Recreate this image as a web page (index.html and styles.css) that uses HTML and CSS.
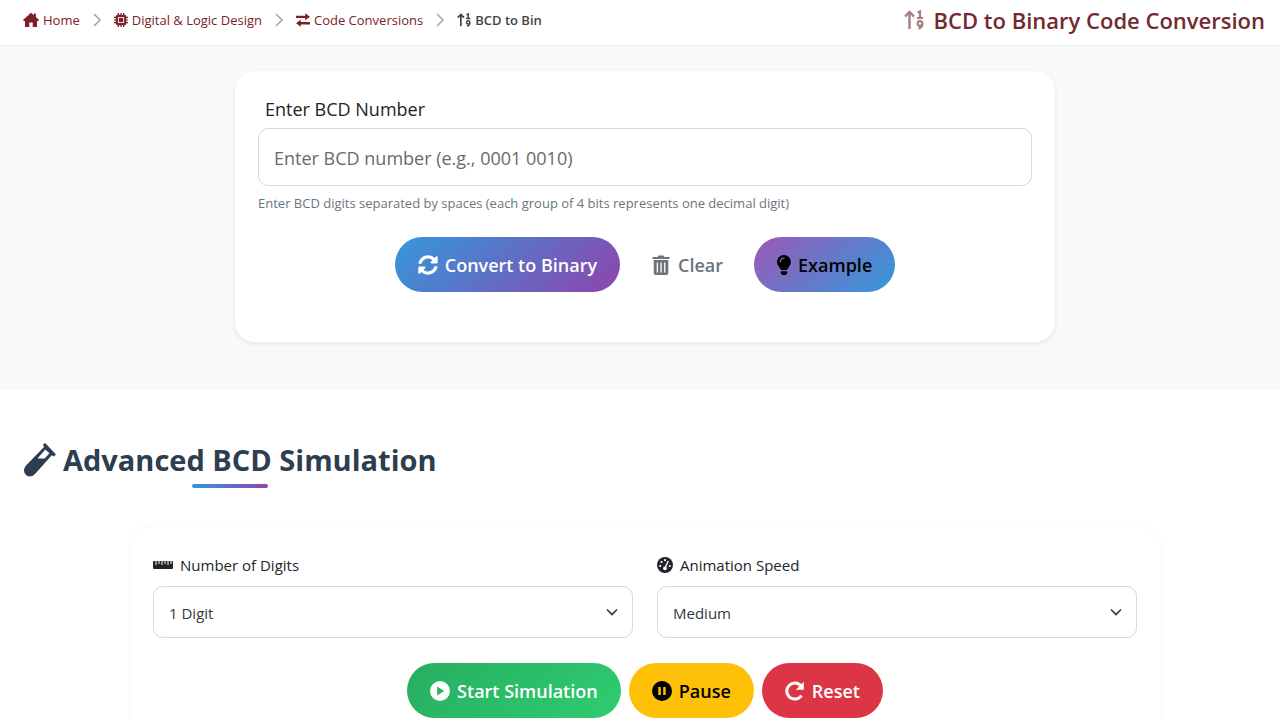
FILE: index.html
```html
<!DOCTYPE html>
<html lang="en">
<head>
<meta charset="utf-8">
<meta name="viewport" content="width=device-width, initial-scale=1">
<title>BCD to Binary Code Conversion</title>
<link rel="stylesheet" href="styles.css">
</head>
<body>
<svg class="sprite" aria-hidden="true">
  <symbol id="sort" viewBox="0 0 20 20">
    <path d="M5.500 19V2.500M1 6.500l4.500-4.500L10 6.500" fill="none" stroke="currentColor" stroke-width="2.400"/>
    <path d="M13.500 2.500l2.500-1V8M13 8h6" fill="none" stroke="currentColor" stroke-width="2.200"/>
    <circle cx="16" cy="13.500" r="2.300" fill="none" stroke="currentColor" stroke-width="2.200"/>
    <path d="M18.300 13.500q0 4-3.800 5.300" fill="none" stroke="currentColor" stroke-width="2.200"/>
  </symbol>
  <symbol id="sep" viewBox="0 0 8 14"><path d="M1 1l6 6-6 6" fill="none" stroke="currentColor" stroke-width="1.700"/></symbol>
</svg>

<header class="topbar">
  <nav class="crumbs" aria-label="Breadcrumb">
    <a class="crumb" href="#">
      <svg class="icon-16" viewBox="0 0 16 16" fill="currentColor"><path d="M8 .7l2.900 2.600V1.500h2v3.600L16 8l-.8.9H14V15H9.700v-4.500H6.300V15H2V8.900H.8L0 8z"/></svg>Home</a>
    <svg class="sep"><use href="#sep"/></svg>
    <a class="crumb" href="#">
      <svg class="icon-14" viewBox="0 0 16 16" fill="currentColor"><path fill-rule="evenodd" d="M4 2h8a2 2 0 0 1 2 2v8a2 2 0 0 1-2 2H4a2 2 0 0 1-2-2V4a2 2 0 0 1 2-2zm.500 2.500v7h7v-7z"/><path d="M5.500 5.500h5v5h-5z"/><path d="M5 0v3M8 0v3M11 0v3M5 13v3M8 13v3M11 13v3M0 5h3M0 8h3M0 11h3M13 5h3M13 8h3M13 11h3" stroke="currentColor" stroke-width="1.400"/></svg>Digital &amp; Logic Design</a>
    <svg class="sep"><use href="#sep"/></svg>
    <a class="crumb" href="#">
      <svg class="icon-14" viewBox="0 0 16 16" fill="currentColor"><path d="M0 3h10.500V.2L16 4.200l-5.500 4V5.600H0zM16 10.400H5.500V7.800L0 11.800l5.500 4V13H16z"/></svg>Code Conversions</a>
    <svg class="sep"><use href="#sep"/></svg>
    <span class="crumb current" aria-current="page"><svg class="icon-14"><use href="#sort"/></svg>BCD to Bin</span>
  </nav>
  <h1 class="title"><svg class="title-icon"><use href="#sort"/></svg>BCD to Binary Code Conversion</h1>
</header>

<main>
  <section class="converter">
    <form class="card convert-card">
      <label class="field-label" for="bcd">Enter BCD Number</label>
      <input class="text-box" id="bcd" type="text" placeholder="Enter BCD number (e.g., 0001 0010)" aria-describedby="hint">
      <p class="hint" id="hint">Enter BCD digits separated by spaces (each group of 4 bits represents one decimal digit)</p>
      <div class="actions">
        <button class="btn convert" type="button">
          <svg class="icon-20" viewBox="0 0 512 512" fill="currentColor"><path d="M371 133C339 104 299 88 256 88c-77 0-144 53-163 127-1 5-6 9-12 9H24c-7 0-13-7-12-14C34 95 135 8 256 8c66 0 127 26 171 69l36-36c15-15 41-4 41 17v134c0 13-11 24-24 24H346c-21 0-32-26-17-41zM32 296h134c21 0 32 26 17 41l-42 42c31 29 72 45 115 45 77 0 144-53 163-127 1-5 6-9 12-9h57c7 0 13 7 12 14C478 417 377 504 256 504c-66 0-127-26-171-69l-36 36c-15 15-41 4-41-17V320c0-13 11-24 24-24z"/></svg>Convert to Binary</button>
        <button class="btn clear" type="button">
          <svg class="icon-20" viewBox="0 0 20 20" fill="currentColor"><path d="M1.500 2h5L7.500.5h5l1 1.500h5v2h-17z"/><path fill-rule="evenodd" d="M2.700 5h14.600v13a2 2 0 0 1-2 2H4.700a2 2 0 0 1-2-2zm3 2.500v10h1.300v-10zm3.700 0v10h1.300v-10zm3.700 0v10h1.300v-10z"/></svg>Clear</button>
        <button class="btn example" type="button">
          <svg class="icon-bulb" viewBox="0 0 352 512" fill="currentColor"><path d="M96 454c0 6 2 13 5 18l17 26a32 32 0 0 0 27 14h62a32 32 0 0 0 27-14l17-26c3-5 5-11 5-18v-38H96zM0 176c0 44 16 85 44 116 16 19 42 58 52 92h160c10-34 36-73 52-92 28-31 44-72 44-116C352 79 273 0 175 0 73 0 0 83 0 176zm176-80c-44 0-80 36-80 80 0 9-7 16-16 16s-16-7-16-16c0-62 50-112 112-112 9 0 16 7 16 16s-7 16-16 16z"/></svg>Example</button>
      </div>
    </form>
  </section>

  <section class="simulation">
    <h2 class="heading">
      <svg class="tube" viewBox="0 0 32 34" fill="currentColor"><path fill-rule="evenodd" d="M19 1.500L21.200 0 32 11.500l-2.200 2-2-1.200L11 31c-3 3.300-7 3-9.200.8C-.6 29-.5 25.500 2 22.500L20 4zM21.300 6.500L13.500 15.500h7.200l4.700-5.300z"/></svg>Advanced BCD Simulation</h2>
    <form class="card sim-card">
      <div class="fields">
        <div class="field">
          <label class="select-label" for="digits">
            <svg class="ruler" viewBox="0 0 20 10" fill="currentColor"><path d="M1 1h1.500v4h1V1h2v3h1V1h2v4h1V1h2v3h1V1h2v4h1V1h2v3h1V1H19a1 1 0 0 1 1 1v6a1 1 0 0 1-1 1H1a1 1 0 0 1-1-1V2a1 1 0 0 1 1-1z"/></svg>Number of Digits</label>
          <select class="select" id="digits"><option>1 Digit</option><option>2 Digits</option><option>3 Digits</option></select>
        </div>
        <div class="field">
          <label class="select-label" for="speed">
            <svg class="icon-16" viewBox="0 0 16 16"><circle cx="8" cy="8" r="8" fill="currentColor"/><g fill="#fff"><circle cx="3.200" cy="9" r="1.100"/><circle cx="4.500" cy="5" r="1.100"/><circle cx="8" cy="3.200" r="1.100"/><circle cx="12.800" cy="9" r="1.100"/><circle cx="8" cy="11.300" r="1.900"/></g><path d="M8 11l3-6.500" stroke="#fff" stroke-width="1.400" stroke-linecap="round"/></svg>Animation Speed</label>
          <select class="select" id="speed"><option>Slow</option><option selected>Medium</option><option>Fast</option></select>
        </div>
      </div>
      <div class="actions">
        <button class="btn start" type="button">
          <svg class="icon-20" viewBox="0 0 20 20" fill="currentColor"><path fill-rule="evenodd" d="M10 0a10 10 0 1 1 0 20 10 10 0 0 1 0-20zM7.200 5.500v9l7-4.500z"/></svg>Start Simulation</button>
        <button class="btn pause" type="button">
          <svg class="icon-20" viewBox="0 0 20 20" fill="currentColor"><path fill-rule="evenodd" d="M10 0a10 10 0 1 1 0 20 10 10 0 0 1 0-20zM6.300 6v8h2.500V6zM11.200 6v8h2.500V6z"/></svg>Pause</button>
        <button class="btn reset" type="button">
          <svg class="icon-20" viewBox="0 0 20 20"><path d="M16.500 14.500A8 8 0 1 1 16 5" fill="none" stroke="currentColor" stroke-width="3"/><path d="M18.800.8v8h-8z" fill="currentColor"/></svg>Reset</button>
      </div>
    </form>
  </section>
</main>
</body>
</html>
```
FILE: styles.css
```css
* { box-sizing: border-box; }

body {
  margin: 0;
  background: #fff;
  color: #212529;
  font-family: "Open Sans", "Noto Sans", sans-serif;
  font-size: 15px;
}

.sprite { position: absolute; width: 0; height: 0; }
svg { flex: none; }
.icon-14 { width: 14px; height: 14px; }
.icon-16 { width: 16px; height: 16px; }
.icon-20 { width: 20px; height: 20px; }
.icon-bulb { width: 14px; height: 20px; }

.topbar {
  display: flex;
  align-items: center;
  justify-content: space-between;
  height: 46px;
  padding: 0 15px 5px 23px;
  border-bottom: 1px solid #f1f2f4;
}

.crumbs { display: flex; align-items: center; gap: 13px; font-size: 13px; }
.crumb { display: flex; align-items: center; gap: 4px; color: #7b2128; text-decoration: none; white-space: nowrap; }
.crumb.current { color: #444; font-weight: 600; }
.sep { width: 8px; height: 14px; color: #aaa; }

.title {
  display: flex;
  align-items: center;
  gap: 10px;
  margin: 0;
  color: #722a2e;
  font-size: 22px;
  font-weight: 600;
  line-height: 30px;
  white-space: nowrap;
}
.title-icon { width: 20px; height: 20px; opacity: 0.6; }

.converter { padding: 25px 0 48px 10px; background: #f8f9fb; }

.card { margin: 0 auto; background: #fff; border-radius: 20px; }

.convert-card {
  max-width: 820px;
  padding: 24px 23px 50px;
  box-shadow: 0 2px 5px rgba(0, 0, 0, 0.08);
}

.field-label { display: block; padding: 0 7px; font-size: 18px; line-height: 28px; margin-bottom: 5px; }

.text-box {
  display: block;
  width: 100%;
  height: 58px;
  padding: 2px 15px 0;
  border: 1px solid #d5d8dc;
  border-radius: 10px;
  background: #fff;
  color: #212529;
  font: inherit;
  font-size: 18px;
}
.text-box::placeholder { color: #666b70; opacity: 1; }

.hint { margin: 7px 0 24px; color: #6c757d; font-size: 13px; line-height: 20px; }

.actions { display: flex; justify-content: center; gap: 8px; }

.btn {
  display: flex;
  align-items: center;
  justify-content: center;
  gap: 7px;
  height: 55px;
  padding: 0 23px;
  border: 0;
  border-radius: 28px;
  color: #fff;
  font: inherit;
  font-size: 18px;
  font-weight: 600;
  white-space: nowrap;
}
.convert { background: linear-gradient(135deg, #3498db, #8e44ad); }
.clear { background: none; color: #6c757d; }
.example { background: linear-gradient(135deg, #9b59b6, #3498db); color: #000; }
.start { background: linear-gradient(135deg, #27ae60, #2ecc71); }
.pause { background: #ffc107; color: #000; }
.reset { background: #dc3545; }

.simulation { padding: 49px 14px 0 24px; }

.heading {
  position: relative;
  display: flex;
  align-items: center;
  gap: 7px;
  width: fit-content;
  margin: 0 0 46px;
  color: #2c3e50;
  font-size: 29px;
  font-weight: 700;
  line-height: 42px;
}
.heading::after {
  content: "";
  position: absolute;
  top: 45px;
  left: 50%;
  width: 76px;
  height: 4px;
  margin-left: -38px;
  border-radius: 2px;
  background: linear-gradient(90deg, #3498db, #8e44ad);
}
.tube { width: 32px; height: 34px; }

.sim-card {
  max-width: 1030px;
  padding: 26px 23px 2px;
  border-radius: 20px 20px 0 0;
  box-shadow: 0 0 5px rgba(0, 0, 0, 0.04);
}

.fields { display: grid; grid-template-columns: 1fr 1fr; gap: 24px; margin-bottom: 25px; }
.select-label { display: flex; align-items: center; gap: 7px; height: 24px; margin-bottom: 9px; font-size: 15px; }
.ruler { width: 20px; height: 10px; }

.select {
  appearance: none;
  display: block;
  width: 100%;
  height: 52px;
  padding: 2px 40px 0 15px;
  border: 1px solid #d5d8dc;
  border-radius: 10px;
  background: #fff url("data:image/svg+xml,%3Csvg xmlns='http://www.w3.org/2000/svg' viewBox='0 0 12 8'%3E%3Cpath d='M1 1.500l5 5 5-5' fill='none' stroke='%23343a40' stroke-width='1.700'/%3E%3C/svg%3E") no-repeat right 14px center / 12px 8px;
  color: #343a40;
  font: inherit;
}
```
